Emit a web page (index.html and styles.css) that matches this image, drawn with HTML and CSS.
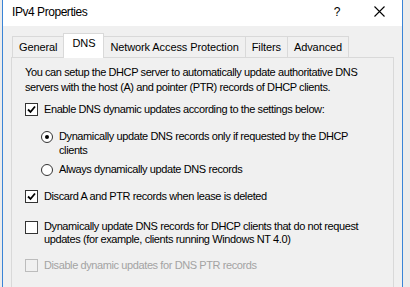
FILE: index.html
```html
<!DOCTYPE html>
<html>
<head>
<meta charset="utf-8">
<link rel="stylesheet" href="styles.css">
</head>
<body>
<div class="window">
  <div class="titlebar">
    <span class="title">IPv4 Properties</span>
    <span class="help">?</span>
    <span class="close"><svg width="11" height="11" viewBox="0 0 11 11"><path d="M0.5 0.5L10.5 10.5M10.5 0.5L0.5 10.5" stroke="#000" stroke-width="1.1" fill="none"/></svg></span>
  </div>
  <div class="content">
    <div class="tabs">
      <div class="tab first">General</div>
      <div class="tab active">DNS</div>
      <div class="tab">Network Access Protection</div>
      <div class="tab">Filters</div>
      <div class="tab">Advanced</div>
    </div>
    <div class="panel">
      <p class="intro">You can setup the DHCP server to automatically update authoritative DNS servers with the host (A) and pointer (PTR) records of DHCP clients.</p>
      <div class="opt check-row r1">
        <span class="cb checked"><svg width="9" height="9" viewBox="0 0 9 9"><path d="M1 4.5L3.5 7L8 1.5" stroke="#000" stroke-width="1.8" fill="none"/></svg></span>
        <span class="label">Enable DNS dynamic updates according to the settings below:</span>
      </div>
      <div class="opt radio-row r2">
        <span class="rb on"><span class="dot"></span></span>
        <span class="label">Dynamically update DNS records only if requested by the DHCP clients</span>
      </div>
      <div class="opt radio-row r3">
        <span class="rb"></span>
        <span class="label">Always dynamically update DNS records</span>
      </div>
      <div class="opt check-row r4">
        <span class="cb checked"><svg width="9" height="9" viewBox="0 0 9 9"><path d="M1 4.5L3.5 7L8 1.5" stroke="#000" stroke-width="1.8" fill="none"/></svg></span>
        <span class="label">Discard A and PTR records when lease is deleted</span>
      </div>
      <div class="opt check-row r5">
        <span class="cb"></span>
        <span class="label">Dynamically update DNS records for DHCP clients that do not request updates (for example, clients running Windows NT 4.0)</span>
      </div>
      <div class="opt check-row r6 disabled">
        <span class="cb"></span>
        <span class="label">Disable dynamic updates for DNS PTR records</span>
      </div>
    </div>
  </div>
</div>
</body>
</html>
```

FILE: styles.css
```css
html, body {
  margin: 0;
  padding: 0;
  background: #ececec;
  overflow: hidden;
}
body {
  font-family: "Liberation Sans", Arial, sans-serif;
  font-size: 11px;
  letter-spacing: -0.4px;
  color: #000;
}
.window {
  margin-left: 2px;
  width: 399px;
  height: 287px;
  border-left: 1px solid #3a84d6;
  border-right: 1px solid #3a84d6;
  background: #f0f0f0;
  overflow: hidden;
}
.titlebar {
  height: 26px;
  background: #fff;
  display: flex;
  align-items: center;
}
.title {
  margin-left: 9px;
  font-size: 12px;
  letter-spacing: -0.45px;
  margin-top: -3px;
}
.help {
  margin-left: auto;
  margin-right: 34px;
  font-size: 12px;
  margin-top: -3px;
}
.close {
  margin-right: 17px;
  display: flex;
  margin-top: -3px;
}
.content {
  padding: 6px 0 0 8px;
}
.tabs {
  display: flex;
  align-items: flex-end;
  padding-left: 1px;
  height: 25px;
  position: relative;
  z-index: 1;
}
.tab {
  height: 20px;
  line-height: 21px;
  padding: 0 6px;
  letter-spacing: -0.1px;
  border: 1px solid #d9d9d9;
  border-bottom: none;
  border-left: none;
  background: #f0f0f0;
}
.tab.first {
  border-left: 1px solid #d9d9d9;
}
.tab.active {
  height: 24px;
  line-height: 19px;
  background: #fff;
  border-left: 1px solid #d9d9d9;
  margin-left: -1px;
  padding: 0 8px 0 8px;
  margin-bottom: -1px;
}
.tab.wide {
  padding: 0 7px;
}
.panel {
  height: 240px;
  border: 1px solid #d9d9d9;
  background: #f0f0f0;
  padding: 0 0 0 13px;
  box-sizing: border-box;
  width: 383px;
}
.intro {
  margin: 7px 0 0 0;
  line-height: 15px;
  width: 360px;
}
.opt {
  display: flex;
  align-items: flex-start;
  line-height: 14px;
}
.label {
  display: block;
}
.cb {
  width: 11px;
  height: 11px;
  border: 1px solid #333;
  background: #fff;
  flex: none;
  margin: 1px 6px 0 0;
  display: flex;
  align-items: center;
  justify-content: center;
}
.rb {
  width: 10px;
  height: 10px;
  border: 1px solid #333;
  border-radius: 50%;
  background: #fff;
  flex: none;
  margin: 2px 6px 0 0;
  display: flex;
  align-items: center;
  justify-content: center;
}
.rb .dot {
  width: 4px;
  height: 4px;
  border-radius: 50%;
  background: #000;
}
.r1 { margin-top: 7px; }
.r2 { margin-top: 13px; padding-left: 16px; width: 320px; }
.r3 { margin-top: 5px; padding-left: 16px; }
.r4 { margin-top: 13px; }
.r5 { margin-top: 17px; width: 355px; }
.r5 .label { line-height: 13px; }
.r6 { margin-top: 12px; }
.disabled .label { color: #a3a3a3; }
.disabled .cb { border-color: #bcbcbc; background: #f0f0f0; }
```
